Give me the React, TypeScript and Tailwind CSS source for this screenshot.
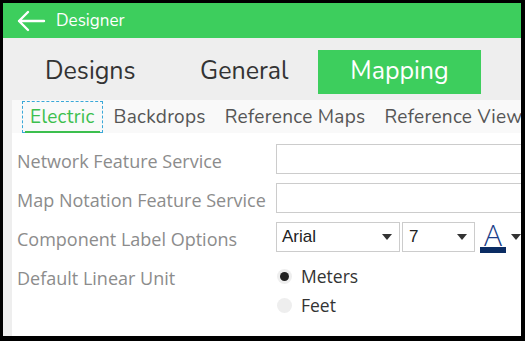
const font = { fontFamily: "Nunito, Lato, 'Open Sans', sans-serif" };

const labels = [
  "Network Feature Service",
  "Map Notation Feature Service",
  "Component Label Options",
  "Default Linear Unit",
];

const Caret = () => (
  <svg width="10" height="6" viewBox="0 0 10 6" className="shrink-0">
    <path d="M0 0h10L5 6z" fill="#333" />
  </svg>
);

export default function App() {
  return (
    <div className="w-[525px] h-[341px] bg-black pt-[3px] pl-[3px] pr-[4px] pb-[5px]">
      <div className="w-full h-full bg-[#eeeeee] flex flex-col overflow-hidden">
        {/* header */}
        <div className="h-[35px] shrink-0 bg-[#3dce5d] flex items-center pl-[14px] gap-[10px] text-white">
          <svg width="29" height="22" viewBox="0 0 29 22" fill="none" stroke="white" strokeWidth="2.4" strokeLinecap="round" strokeLinejoin="round">
            <path d="M27 11H2M11 2L2 11l9 9" />
          </svg>
          <span className="text-[17px] leading-none" style={font}>Designer</span>
        </div>

        {/* main tabs */}
        <div className="h-[62px] shrink-0 flex items-start pt-[12px] pl-[42px] text-[25px] text-[#333] whitespace-nowrap" style={font}>
          <span className="w-[155px] h-[44px] flex items-center">Designs</span>
          <span className="w-[118px] h-[44px] flex items-center">General</span>
          <span className="w-[163px] h-[44px] bg-[#3dce5d] text-white flex items-center justify-center">Mapping</span>
        </div>

        {/* panel */}
        <div className="flex-1 ml-[9px] bg-white flex flex-col">
          <div className="h-[33px] shrink-0 bg-[#f9f9f9] flex items-stretch pl-[10px] pt-[1px] gap-[3px] text-[19px] tracking-[0.3px] text-[#555] whitespace-nowrap overflow-hidden" style={font}>
            <span className="border border-dashed border-[#3aa8d8] px-[7px] pt-[1px] flex items-center text-[#3cbf4e] relative">
              Electric
              <span className="absolute left-[2px] right-[2px] bottom-[-1px] h-[2px] bg-[#3cbf4e]" />
            </span>
            <span className="border border-transparent px-[7px] pt-[1px] flex items-center">Backdrops</span>
            <span className="border border-transparent px-[7px] pt-[1px] flex items-center">Reference Maps</span>
            <span className="border border-transparent px-[7px] pt-[1px] flex items-center">Reference Views</span>
          </div>

          <div className="grid grid-cols-[259px_1fr] pl-[5px] pt-[11px] text-[18px] text-[#8c8c8c]" style={{ fontFamily: "'Open Sans', sans-serif" }}>
            <span className="h-[30px] pt-[5px] flex items-center whitespace-nowrap">{labels[0]}</span>
            <div className="h-[30px] border border-[#cccccc] -mr-[10px]" />
            <span className="h-[30px] mt-[9px] pt-[5px] flex items-center whitespace-nowrap">{labels[1]}</span>
            <div className="h-[30px] mt-[9px] border border-[#cccccc] -mr-[10px]" />
            <span className="h-[30px] mt-[9px] pt-[5px] flex items-center whitespace-nowrap">{labels[2]}</span>
            <div className="h-[30px] mt-[9px] flex items-center gap-[2px] whitespace-nowrap" style={{ fontFamily: "'Liberation Sans', Arial, sans-serif" }}>
              <div className="w-[124px] h-full border border-[#cccccc] flex items-center justify-between pl-[5px] pr-[7px] text-[17px] text-[#222]">
                Arial <Caret />
              </div>
              <div className="w-[73px] h-full border border-[#cccccc] flex items-center justify-between pl-[6px] pr-[7px] text-[17px] text-[#222]">
                7 <Caret />
              </div>
              <div className="flex items-center ml-[3px] gap-[5px]">
                <div className="flex flex-col items-center w-[26px] pt-[2px]">
                  <span className="text-[30px] leading-[22px] font-light text-[#1c3f8a]" style={{ fontFamily: "'Open Sans', sans-serif" }}>A</span>
                  <span className="w-[26px] h-[6px] bg-[#0b2c63] mt-[1px]" />
                </div>
                <Caret />
              </div>
            </div>
            <span className="h-[30px] mt-[9px] pt-[5px] flex items-center whitespace-nowrap">{labels[3]}</span>
            <div className="mt-[13px] flex flex-col gap-[7px] text-[#333] text-[17.5px] pl-[1px]">
              <label className="h-[22px] flex items-center gap-[9px]">
                <span className="w-[15px] h-[15px] rounded-full bg-[#eeeeee] flex items-center justify-center">
                  <span className="w-[9px] h-[9px] rounded-full bg-[#222]" />
                </span>
                Meters
              </label>
              <label className="h-[22px] flex items-center gap-[9px]">
                <span className="w-[15px] h-[15px] rounded-full bg-[#eeeeee]" />
                Feet
              </label>
            </div>
          </div>
        </div>
      </div>
    </div>
  );
}
